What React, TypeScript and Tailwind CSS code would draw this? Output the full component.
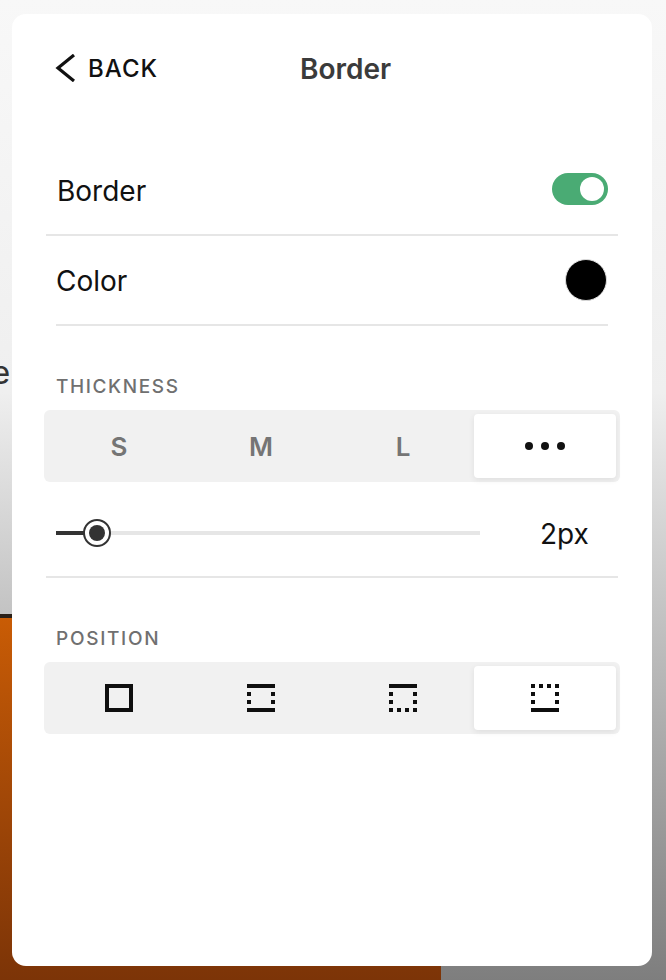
const font = "font-['Inter','Liberation_Sans',sans-serif]"

function Dots({ top, bottom }: { top: boolean; bottom: boolean }) {
  return (
    <svg width="28" height="28" viewBox="0 0 28 28" fill="#0f0f0f">
      {top ? <rect x="0" y="0" width="28" height="4" /> : [0, 8, 16, 24].map((x) => <rect key={x} x={x} y="0" width="4" height="4" />)}
      {[8, 16].map((y) => (
        <g key={y}>
          <rect x="0" y={y} width="4" height="4" />
          <rect x="24" y={y} width="4" height="4" />
        </g>
      ))}
      {bottom ? <rect x="0" y="24" width="28" height="4" /> : [0, 8, 16, 24].map((x) => <rect key={x} x={x} y="24" width="4" height="4" />)}
    </svg>
  )
}

function Square() {
  return (
    <svg width="28" height="28" viewBox="0 0 28 28" fill="none">
      <rect x="2" y="2" width="24" height="24" stroke="#0f0f0f" strokeWidth="4" />
    </svg>
  )
}

function Segment({ children }: { children: React.ReactNode }) {
  return <div className="mx-[32px] grid h-[72px] grid-cols-4 rounded-[6px] bg-[#f1f1f1] p-1">{children}</div>
}

function Tab({ active, children }: { active?: boolean; children: React.ReactNode }) {
  return (
    <div
      className={
        active
          ? "flex items-center justify-center rounded-[4px] bg-white shadow-[0_2px_6px_rgba(0,0,0,0.08)]"
          : "flex items-center justify-center"
      }
    >
      {children}
    </div>
  )
}

export default function App() {
  return (
    <div className={`${font} relative h-[980px] w-[666px] overflow-hidden bg-gradient-to-b from-[#f8f8f8] via-[#efefef] via-40% to-[#7e7e7e]`}>
      {/* page behind the panel */}
      <div className="absolute bottom-0 left-0 top-[614px] w-[441px] border-t-[4px] border-[#2a2018] bg-gradient-to-b from-[#c95c05] to-[#7c3407]" />
      <span className="absolute left-[-9px] top-[352px] text-[33px] leading-[40px] text-[#333]">e</span>

      <div className="absolute left-[12px] top-[14px] h-[952px] w-[640px] rounded-[14px] bg-white">
        <div className="relative flex h-[109px] items-center px-[44px] pb-[1px]">
          <svg width="20" height="28" viewBox="0 0 20 28" fill="none" className="mb-[1px] ml-[-1px]">
            <path d="M19 1 L3 14 L19 27" stroke="#111" strokeWidth="3.2" />
          </svg>
          <span className="ml-[13px] mt-[1px] text-[24px] font-medium leading-[30px] tracking-[1px] text-[#111]">BACK</span>
          <span className="absolute left-[288px] top-[38px] text-[28px] font-semibold leading-[34px] text-[#3b3b3b]">Border</span>
        </div>

        <div className="mx-[34px] mt-[33px] flex h-[80px] items-center justify-between border-b-2 border-[#e6e6e6] pl-[11px] pr-[10px] pb-[12px]">
          <span className="mt-[4px] text-[28px] leading-[34px] text-[#111]">Border</span>
          <div className="flex h-[32px] w-[56px] items-center justify-end rounded-full bg-[#4aab74] pr-[4px]">
            <div className="h-[24px] w-[24px] rounded-full bg-white" />
          </div>
        </div>

        <div className="mx-[44px] flex h-[90px] items-center justify-between border-b-2 border-[#e6e6e6] pr-[1px]">
          <span className="mt-[2px] text-[28px] leading-[34px] text-[#111]">Color</span>
          <div className="h-[42px] w-[42px] rounded-full border border-[#ddd] bg-black" />
        </div>

        <div className="ml-[44px] mt-[50px] text-[19px] font-medium leading-[22px] tracking-[1.6px] text-[#707070]">THICKNESS</div>
        <div className="mt-[12px]">
          <Segment>
            <Tab><span className="text-[26px] font-semibold text-[#757575]">S</span></Tab>
            <Tab><span className="text-[26px] font-semibold text-[#757575]">M</span></Tab>
            <Tab><span className="text-[26px] font-semibold text-[#757575]">L</span></Tab>
            <Tab active>
              <div className="flex gap-[8px]">
                <div className="h-[8px] w-[8px] rounded-full bg-[#111]" />
                <div className="h-[8px] w-[8px] rounded-full bg-[#111]" />
                <div className="h-[8px] w-[8px] rounded-full bg-[#111]" />
              </div>
            </Tab>
          </Segment>
        </div>

        <div className="mx-[34px] flex h-[96px] items-center border-b-2 border-[#e6e6e6] pl-[10px] pt-[7px]">
          <div className="relative h-[4px] w-[424px] bg-[#e6e6e6]">
            <div className="h-[4px] w-[30px] bg-[#333]" />
            <div className="absolute left-[27px] top-[-12px] flex h-[28px] w-[28px] items-center justify-center rounded-full border-2 border-[#333] bg-white">
              <div className="h-[16px] w-[16px] rounded-full bg-[#333]" />
            </div>
          </div>
          <span className="ml-[60px] mt-[3px] text-[28px] leading-[34px] text-[#111]">2px</span>
        </div>

        <div className="ml-[44px] mt-[50px] text-[19px] font-medium leading-[22px] tracking-[1.7px] text-[#707070]">POSITION</div>
        <div className="mt-[12px]">
          <Segment>
            <Tab><Square /></Tab>
            <Tab><Dots top bottom /></Tab>
            <Tab><Dots top bottom={false} /></Tab>
            <Tab active><Dots top={false} bottom /></Tab>
          </Segment>
        </div>
      </div>
    </div>
  )
}
